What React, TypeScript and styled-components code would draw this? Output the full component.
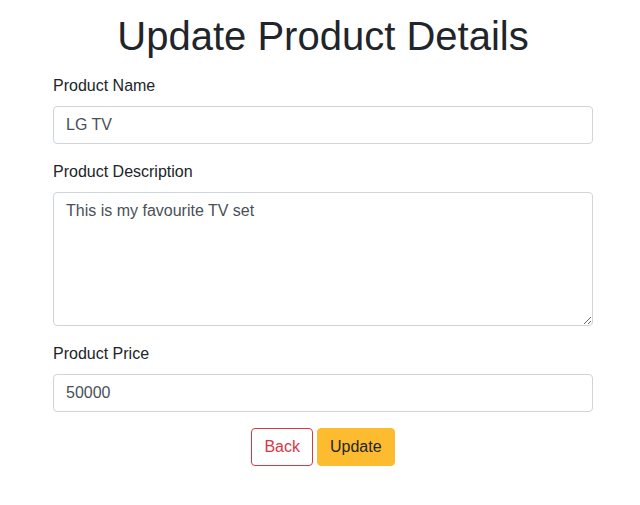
import React from "react";
import styled, { createGlobalStyle } from "styled-components";

const GlobalStyle = createGlobalStyle`
  * {
    box-sizing: border-box;
  }

  body {
    margin: 0;
    background: #fff;
    color: #212529;
    font-family: "Liberation Sans", Arial, sans-serif;
    font-size: 16px;
    line-height: 1.5;
  }
`;

const Page = styled.div`
  padding: 12px 0 0 6px;
`;

const Container = styled.div`
  width: 540px;
  margin: 0 auto;
`;

const Title = styled.h1`
  margin: 0 0 14px;
  font-size: 40px;
  font-weight: 400;
  line-height: 1.2;
  text-align: center;
  color: #212529;
`;

const FormGroup = styled.div`
  margin-bottom: 16px;
`;

const Label = styled.label`
  display: block;
  margin-bottom: 8px;
`;

const fieldStyles = `
  display: block;
  width: 100%;
  padding: 6px 12px;
  font-family: "Liberation Sans", Arial, sans-serif;
  font-size: 16px;
  line-height: 1.5;
  color: #495057;
  background: #fff;
  border: 1px solid #ced4da;
  border-radius: 4px;
  outline: none;
`;

const Input = styled.input`
  ${fieldStyles}
  height: 38px;
`;

const TextArea = styled.textarea`
  ${fieldStyles}
  height: 134px;
  resize: vertical;
`;

const Actions = styled.div`
  display: flex;
  justify-content: center;
  gap: 4px;
`;

const Button = styled.button<{ $variant: "outline-danger" | "warning" }>`
  height: 38px;
  padding: 6px 12px;
  font-family: "Liberation Sans", Arial, sans-serif;
  font-size: 16px;
  line-height: 1.5;
  border-radius: 4px;
  cursor: pointer;
  border: 1px solid
    ${(p) => (p.$variant === "warning" ? "#fdbb30" : "#dc3545")};
  background: ${(p) => (p.$variant === "warning" ? "#fdbb30" : "transparent")};
  color: ${(p) => (p.$variant === "warning" ? "#212529" : "#dc3545")};
`;

const App = () => {
  return (
    <Page>
      <GlobalStyle />
      <Container>
        <Title>Update Product Details</Title>
        <FormGroup>
          <Label htmlFor="name">Product Name</Label>
          <Input id="name" type="text" defaultValue="LG TV" />
        </FormGroup>
        <FormGroup>
          <Label htmlFor="description">Product Description</Label>
          <TextArea
            id="description"
            rows={5}
            defaultValue="This is my favourite TV set"
          />
        </FormGroup>
        <FormGroup>
          <Label htmlFor="price">Product Price</Label>
          <Input id="price" type="text" defaultValue="50000" />
        </FormGroup>
        <Actions>
          <Button $variant="outline-danger">Back</Button>
          <Button $variant="warning">Update</Button>
        </Actions>
      </Container>
    </Page>
  );
};

export default App;
